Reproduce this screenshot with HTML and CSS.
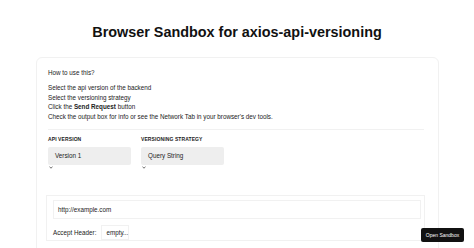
FILE: index.html
```html
<!DOCTYPE html>
<html lang="en">
<head>
<meta charset="utf-8">
<title>Browser Sandbox for axios-api-versioning</title>
<link rel="stylesheet" href="styles.css">
</head>
<body>
<h1 class="title">Browser Sandbox for axios-api-versioning</h1>
<main class="card">
  <p class="intro">How to use this?</p>
  <div class="steps">
    <div>Select the api version of the backend</div>
    <div>Select the versioning strategy</div>
    <div>Click the <b>Send Request</b> button</div>
    <div>Check the output box for info or see the Network Tab in your browser's dev tools.</div>
  </div>
  <hr class="sep">
  <div class="fields">
    <div class="field">
      <div class="label">API VERSION</div>
      <div class="select">Version 1</div>
      <svg class="chev" width="4" height="3" viewBox="0 0 4 3"><path d="M0.5 0.8 L2 2.2 L3.5 0.8" fill="none" stroke="#444" stroke-width="0.8"/></svg>
    </div>
    <div class="field">
      <div class="label">VERSIONING STRATEGY</div>
      <div class="select">Query String</div>
      <svg class="chev" width="4" height="3" viewBox="0 0 4 3"><path d="M0.5 0.8 L2 2.2 L3.5 0.8" fill="none" stroke="#444" stroke-width="0.8"/></svg>
    </div>
  </div>
  <section class="request">
    <div class="url">http://example.com</div>
    <div class="header-row">
      <span>Accept Header:</span>
      <span class="hdr-box">empty...</span>
    </div>
  </section>
</main>
<button class="open-btn">Open Sandbox</button>
</body>
</html>
```
FILE: styles.css
```css
html, body {
  margin: 0;
  padding: 0;
  background: #fff;
}
body {
  font-family: "Liberation Sans", Arial, sans-serif;
  color: #222;
  overflow: hidden;
  height: 248px;
}
.title {
  margin: 24px 0 0;
  font-size: 14.4px;
  line-height: 17px;
  font-weight: bold;
  text-align: center;
  color: #111;
}
.card {
  margin: 16px 35px 0 36px;
  border: 1px solid #f1f1f1;
  border-radius: 6px;
  padding: 10px 14px 30px 11px;
  font-size: 6.3px;
}
.intro {
  margin: 0 0 5.4px;
  line-height: 9.6px;
}
.steps {
  line-height: 9.7px;
}
.sep {
  margin: 7px 0 0;
  border: 0;
  border-top: 1px solid #f1f1f1;
  height: 0;
}
.fields {
  display: flex;
  gap: 10px;
  margin-top: 6.5px;
}
.field {
  display: flex;
  flex-direction: column;
  width: 83px;
}
.label {
  font-size: 5px;
  font-weight: bold;
  line-height: 7px;
  letter-spacing: 0.1px;
  color: #222;
}
.select {
  margin-top: 3.5px;
  height: 18px;
  background: #eeeeee;
  border-radius: 2px;
  padding-left: 7px;
  display: flex;
  align-items: center;
  font-size: 6.3px;
}
.chev {
  display: block;
  margin: 1.5px 0 0 1px;
}
.request {
  margin: 26px -1px 0 -2px;
  border: 1px solid #f1f1f1;
  padding: 4px 3px 0 6px;
}
.url {
  height: 17px;
  border: 1px solid #f1f1f1;
  padding-left: 4px;
  display: flex;
  align-items: center;
}
.header-row {
  display: flex;
  align-items: center;
  gap: 5px;
  margin-top: 6px;
}
.hdr-box {
  width: 22px;
  height: 13px;
  border: 1px solid #f1f1f1;
  padding-left: 4px;
  display: flex;
  align-items: center;
}
.open-btn {
  position: fixed;
  right: 10px;
  bottom: 6px;
  width: 43px;
  height: 14px;
  padding: 0;
  border: 0;
  border-radius: 2px;
  background: #111;
  color: #fff;
  font-family: "Liberation Sans", Arial, sans-serif;
  font-size: 5px;
}
```
